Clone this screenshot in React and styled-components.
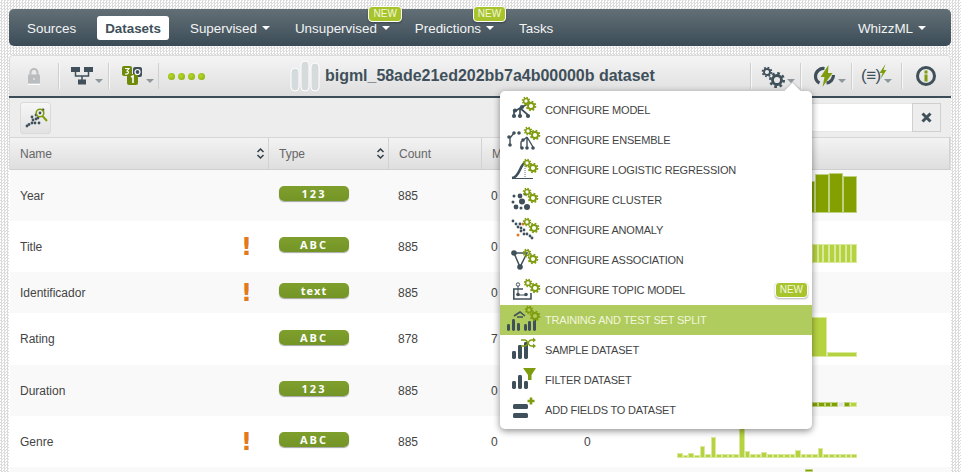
import React from 'react';
import styled, { createGlobalStyle } from 'styled-components';

const Global = createGlobalStyle`
  html, body { margin: 0; padding: 0; height: 472px; overflow: hidden; }
  body {
    font-family: "Liberation Sans", Arial, sans-serif;
    background-color: #fff;
    background-image: repeating-conic-gradient(#dcdcdc 0 25%, #fff 0 50%);
    background-size: 3px 3px;
  }
`;
const Page = styled.div`width: 942px; padding: 9px 0 0 9px;`;
const Nav = styled.nav`
  height: 37px; box-sizing: border-box; display: flex; align-items: center; gap: 13px; padding: 1px 21px 0 10px; border-radius: 5px;
  background: linear-gradient(#636f76, #3b4c57); margin-bottom: 9px;
`;
const NavItem = styled.div`
  position: relative; display: flex; align-items: center; gap: 5px; height: 24px;
  padding: ${p => (p.$menu ? '0 4px 0 8px' : '0 8px')}; font-size: 13.4px; border-radius: 3px;
  color: ${p => (p.$active ? '#3f505a' : '#f2f4f4')};
  background: ${p => (p.$active ? '#fff' : 'transparent')};
  font-weight: ${p => (p.$active ? 700 : 400)};
  ${p => p.$right && 'margin-left: auto;'}
`;
const Caret = styled.i`
  display: block; width: 0; height: 0; flex: none;
  border-left: ${p => p.$s || 4.5}px solid transparent; border-right: ${p => p.$s || 4.5}px solid transparent;
  border-top: ${p => p.$s || 4.5}px solid ${p => p.$c || '#fff'};
`;
const Badge = styled.span`
  font-size: 10px; line-height: 14px; color: #f4f8dc; background: #a8c42c; border: 1px solid #fff; border-radius: 4px;
  padding: 0 4px; box-shadow: 0 1px 2px rgba(0,0,0,.3);
`;
const NavBadge = styled(Badge)`position: absolute; top: -10px; right: -8px;`;

const Panel = styled.main`position: relative; background: #fff;`;
const ToolWrap = styled.div`border-bottom: 2px solid #3b4c57;`;
const Toolbar = styled.div`
  height: 41px; display: flex; align-items: center; border: 1px solid #dcdcdc; border-bottom: 0; border-radius: 4px 4px 0 0;
  background: linear-gradient(#f4f4f4, #dedede); box-sizing: border-box;
`;
const Tool = styled.div`
  width: ${p => p.$w}px; height: 26px; display: flex; align-items: center; justify-content: ${p => (p.$pl ? 'flex-start' : 'center')};
  gap: ${p => p.$gap ?? 2}px; padding-left: ${p => p.$pl || 0}px; flex: none; box-sizing: border-box;
  ${p => p.$sep && 'border-left: 1px solid #cfcfcf; box-shadow: inset 1px 0 0 #f7f7f7;'}
`;
const ToolCaret = styled(Caret).attrs({ $s: 4, $c: '#8e979c' })`margin-top: 9px;`;
const Dots = styled.div`display: flex; gap: 3px; padding-left: 9px; width: 122px; flex: none;`;
const Dot = styled.span`
  width: 7px; height: 7px; border-radius: 50%; background: radial-gradient(circle at 40% 40%, #b5d82a, #86a80c);
`;
const Title = styled.h1`
  margin: 0; flex: 1; display: flex; align-items: center; gap: 5px; font-size: 16px; font-weight: 700; color: #3f505a; white-space: nowrap; letter-spacing: -.03px;
`;
const Formula = styled.span`font-size: 17px; color: #3f505a; letter-spacing: -.5px;`;
const Bolt = styled.svg`margin: -6px -4px 0 -3px; flex: none;`;

const SearchBar = styled.div`
  height: 39px; display: flex; align-items: center; justify-content: space-between; padding: 0 10px 0 11px;
  background: #ededed; border-left: 1px solid #ddd; border-bottom: 1px solid #d6d6d6;
`;
const IconButton = styled.button`
  width: 29px; height: 30px; padding: 0; border: 0; border-radius: 3px; display: flex; align-items: center; justify-content: center;
  background: linear-gradient(#f6f6f6, #e2e2e2); box-shadow: 0 0 0 1px #dadada, 0 1px 1px rgba(0,0,0,.15);
`;
const SearchBox = styled.div`display: flex; height: 29px;`;
const SearchInput = styled.div`width: 200px; background: #fff; border: 1px solid #e6e6e6; border-right: 0;`;
const ClearButton = styled.div`
  width: 27px; border: 1px solid #cfcfcf; background: #ededed; display: flex; align-items: center; justify-content: center;
`;

const columns = '259px 120px 93px 93px 102px 1fr';
const HeadRow = styled.div`
  display: grid; grid-template-columns: ${columns}; height: 31px; background: linear-gradient(#f3f3f3, #dedede);
  border-left: 1px solid #ddd; border-bottom: 1px solid #cfcfcf; border-right: 1px solid #ddd;
`;
const HeadCell = styled.div`
  display: flex; align-items: center; justify-content: space-between; padding: 0 3px 0 10px; font-size: 12px; color: #666;
  border-right: 1px solid #d2d2d2; box-sizing: border-box;
`;
const Row = styled.div`
  display: grid; grid-template-columns: ${columns}; height: ${p => p.$h}px; margin-left: 1px;
  background: ${p => (p.$odd ? '#f9f9f9' : '#fff')};
`;
const Cell = styled.div`display: flex; align-items: center; padding-left: ${p => p.$pad ?? 10}px; font-size: 12px; color: #444;`;
const NameCell = styled(Cell)`justify-content: space-between; padding-right: 18px;`;
const Warn = styled.span`
  font: 700 24px/1 "DejaVu Sans", sans-serif; color: #e2791d; width: 8px; text-align: center; margin-right: 2px;
`;
const TypePill = styled.span`
  display: block; width: 70px; height: 15px; margin-top: -4px; text-align: center; border-radius: 5px;
  background: linear-gradient(#7f9f2d, #739526); box-shadow: 0 1px 1px rgba(0,0,0,.35);
  color: #fff; font: 700 11px/15px "Open Sans", sans-serif; letter-spacing: ${p => p.$ls}px;
`;
const Hist = styled.div`
  grid-column: 6; width: 180px; display: flex; align-items: flex-end; padding-bottom: ${p => p.$pb ?? 8}px;
`;
const Bar = styled.span`
  flex: 1 1 0; box-sizing: border-box; min-width: 0; border: 1px solid ${p => (p.$c === 'dark' ? '#bdd27e' : p.$c === 'gray' ? '#eee' : '#dbe99c')};
  background: ${p => (p.$c === 'dark' ? '#849f00' : p.$c === 'gray' ? '#e2e2e2' : '#b5d340')};
`;

const Menu = styled.div`
  position: absolute; left: 491px; top: 36px; width: 312px; height: 338px; box-sizing: border-box; padding-top: 4px; background: #fff;
  border-radius: 5px; box-shadow: 0 2px 7px rgba(0,0,0,.45); z-index: 5;
  &::before {
    content: ''; position: absolute; right: 14px; top: -6px; width: 11px; height: 11px; background: #fff; transform: rotate(45deg);
    box-shadow: -1px -1px 1px rgba(0,0,0,.12);
  }
`;
const MenuItem = styled.div`
  position: relative; height: 30px; display: flex; align-items: center; font-size: 11px; letter-spacing: -.2px;
  color: ${p => (p.$active ? '#f2f6dd' : '#444')}; background: ${p => (p.$active ? '#b0cb5e' : 'transparent')};
`;
const MenuIcon = styled.svg`width: 45px; height: 30px; flex: none; display: block;`;
const MenuBadge = styled(Badge)`margin-left: auto; margin-right: 4px; letter-spacing: 0;`;

const D = '#3f505a', G = '#7f9c0e';
const Gear = ({ x, y, r, c = G }) => {
  const t = 2 * Math.PI * r * 0.9 / 16;
  return (
    <g fill="none" stroke={c}>
      <circle cx={x} cy={y} r={r * 0.6} strokeWidth={r * 0.38} />
      <circle cx={x} cy={y} r={r * 0.9} strokeWidth={r * 0.34} strokeDasharray={`${t} ${t}`} />
    </g>
  );
};
const Dotted = ({ pts, r = 1.6, c = D }) => <g fill={c}>{pts.map(([x, y], i) => <circle key={i} cx={x} cy={y} r={r} />)}</g>;
const Gears = ({ a = [27, 7], b = [33, 12] }) => <><Gear x={a[0]} y={a[1]} r={4} /><Gear x={b[0]} y={b[1]} r={5} /></>;
const Bars = ({ list, w = 3.6, base = 24, c = D }) => (
  <g fill={c}>{list.map(([x, h], i) => <rect key={i} x={x} y={base - h} width={w} height={h} rx={1.4} />)}</g>
);

const icons = {
  model: <>
    <path d="M14 21V17L20 13L26 10M20 13V21M20 13L28 20" fill="none" stroke={D} strokeWidth="1.7" />
    <Dotted r={2.1} pts={[[14, 21], [20, 21], [28, 21], [15, 15.5], [22, 12]]} /><Gears a={[26, 6]} b={[31, 11]} /></>,
  ensemble: <>
    <path d="M10 20V13L14 8M21 23V17L27 12M27 12V23M27 12L33 22" fill="none" stroke={D} strokeWidth="1.4" />
    <Dotted pts={[[9, 12], [10, 20], [14, 8], [19, 8], [22, 23], [27, 23], [33, 23], [23, 15]]} r={1.8} /><Gears a={[28, 6]} b={[35, 10]} /></>,
  logistic: <>
    <path d="M12 23C20 22 20 9 25 8" fill="none" stroke={D} strokeWidth="2.6" />
    <path d="M25 9V23" stroke={D} strokeWidth=".8" strokeDasharray="1 1" /><path d="M12 23.5H33" stroke={D} />
    <Gears a={[27, 8]} b={[33, 13]} /></>,
  cluster: <>
    <Dotted r={1.5} pts={[[14, 11], [25, 9], [21, 23], [13, 17]]} />
    <Dotted r={2.4} pts={[[20, 11], [16, 22]]} /><Dotted r={3} pts={[[22, 16.5], [27, 22]]} />
    <Gears a={[27, 7]} b={[33, 13]} /></>,
  anomaly: <>
    <Dotted r={1.4} pts={[[13, 6], [16, 9], [18, 12], [21, 13], [21, 16], [24, 15], [24, 19], [27, 19], [30, 21], [32, 23], [20, 9]]} />
    <Dotted r={1.5} c="#e2791d" pts={[[23, 9], [18, 20]]} /><Gears a={[27, 7]} b={[34, 13]} /></>,
  association: <>
    <path d="M14 8L20 22L27 8Z" fill="none" stroke={D} strokeWidth="1.5" /><Dotted r={2.8} pts={[[14, 8], [20, 22]]} />
    <Gears a={[27, 8]} b={[33, 14]} /></>,
  topic: <>
    <path d="M23 14H13.8V24H31V18" fill="none" stroke={D} strokeWidth="1.6" />
    <path d="M18 11V20H27" fill="none" stroke={D} />
    <circle cx="18" cy="9.5" r="1.7" fill="none" stroke={D} /><Dotted r={1.8} pts={[[18, 19.5], [26, 19.5]]} />
    <Gears a={[28, 8]} b={[35, 13]} /></>,
  split: <>
    <Bars base={26} list={[[7, 7], [12, 12], [17, 8], [24, 7], [28, 10], [33, 13]]} w={3} />
    <path d="M14 11L20 7L25 11M17 12H23" fill="none" stroke={D} strokeWidth="1.6" /><Gears a={[29, 5]} b={[35, 11]} /></>,
  sample: <>
    <Bars list={[[12, 8], [18, 14], [24, 17]]} w={4} />
    <path d="M21 5H25C28 5 28 11 31 11H34M21 11H25C28 11 28 5 31 5H34" fill="none" stroke={G} strokeWidth="1.5" />
    <path d="M33 2.5L36 5L33 7.5ZM33 8.5L36 11L33 13.5Z" fill={G} /></>,
  filter: <>
    <Bars list={[[12, 8], [18, 14], [24, 8]]} w={4} /><path d="M23 3H36L31.5 10V15H28V10Z" fill={G} /></>,
  add: <>
    <rect x="13" y="9" width="15" height="5" rx="1.5" fill={D} /><rect x="13" y="18" width="15" height="5" rx="1.5" fill={D} />
    <path d="M31 2.5V9.5M27.5 6H34.5" stroke={G} strokeWidth="2.6" /></>,
};

const menu = [
  ['model', 'CONFIGURE MODEL'], ['ensemble', 'CONFIGURE ENSEMBLE'], ['logistic', 'CONFIGURE LOGISTIC REGRESSION'],
  ['cluster', 'CONFIGURE CLUSTER'], ['anomaly', 'CONFIGURE ANOMALY'], ['association', 'CONFIGURE ASSOCIATION'],
  ['topic', 'CONFIGURE TOPIC MODEL', 'new'], ['split', 'TRAINING AND TEST SET SPLIT', 'active'],
  ['sample', 'SAMPLE DATASET'], ['filter', 'FILTER DATASET'], ['add', 'ADD FIELDS TO DATASET'],
];

const SortIcon = () => (
  <svg width="9" height="13" viewBox="0 0 9 13"><path d="M1.5 5L4.5 2L7.5 5M1.5 8L4.5 11L7.5 8" fill="none" stroke="#2f3f49" strokeWidth="1.5" /></svg>
);
const fill = (n, h, c) => Array.from({ length: n }, () => ({ h, c }));
const genre = [5, 3, 5, 3, 12, 4, 21, 4, 4, 4, 4, 36, 7, 4, 4, 6, 4, 4, 4, 4, 4, 8, 4, 4, 4, 10, 4, 4, 4, 4, 4, 4];
const rows = [
  { name: 'Year', type: '123', count: 885, m: 0, h: 51, pb: 8, bars: [8, 10, 12, 14, 18, 20, 22, 26, 28, 32, 39, 40, 37].map(h => ({ h, c: 'dark' })) },
  { name: 'Title', warn: 1, type: 'ABC', count: 885, m: 0, h: 51, pb: 9, bars: fill(32, 19) },
  { name: 'Identificador', warn: 1, type: 'text', ls: 1, count: 885, m: 0, h: 41, bars: [] },
  { name: 'Rating', type: 'ABC', count: 878, m: 7, h: 52, pb: 8, bars: [0, 0, 0, 0, 40, 5].map(h => ({ h })) },
  { name: 'Duration', type: '123', count: 885, m: 0, h: 51, pb: 9, bars: [...fill(25, 5, 'dark'), { h: 5, c: 'gray' }, { h: 5, c: 'dark' }, { h: 5 }] },
  { name: 'Genre', warn: 1, type: 'ABC', count: 885, m: 0, e: 0, h: 51, pb: 9, bars: genre.map(h => ({ h })) },
];

const Histogram = ({ bars, pb }) => (
  <Hist $pb={pb}>{bars.map((b, i) => <Bar key={i} $c={b.c} style={{ height: b.h }} />)}</Hist>
);

const SearchGlyph = () => (
  <svg width="24" height="24" viewBox="0 0 24 24">
    <Dotted r={1.4} pts={[[3, 20], [5, 18.5], [8, 17], [9, 14], [11, 17], [12, 13], [14, 12], [15, 17], [12, 9], [8, 11], [16, 7], [19, 4]]} />
    <circle cx="16" cy="7" r="3.8" fill="none" stroke={G} strokeWidth="1.6" /><path d="M18.5 10L23 15" stroke={G} strokeWidth="2" />
  </svg>
);

export default function App() {
  return (
    <>
      <Global />
      <Page>
        <Nav>
          <NavItem>Sources</NavItem>
          <NavItem $active>Datasets</NavItem>
          <NavItem $menu>Supervised <Caret /></NavItem>
          <NavItem $menu>Unsupervised <Caret /><NavBadge>NEW</NavBadge></NavItem>
          <NavItem $menu>Predictions <Caret /><NavBadge>NEW</NavBadge></NavItem>
          <NavItem>Tasks</NavItem>
          <NavItem $right $menu>WhizzML <Caret /></NavItem>
        </Nav>
        <Panel>
          <ToolWrap>
            <Toolbar>
              <Tool $w={48}>
                <svg width="14" height="18" viewBox="0 0 14 18">
                  <path d="M3.5 8V5.5a3.5 3.5 0 017 0V8" fill="none" stroke="#b9bdbf" strokeWidth="2" />
                  <rect x="1" y="7.5" width="12" height="9" rx="1" fill="#b9bdbf" /><path d="M1 17.5H13" stroke="#fff" /><circle cx="7" cy="12" r="1" fill="#e4e4e4" />
                </svg>
              </Tool>
              <Tool $w={50} $sep $pl={11} $gap={1}>
                <svg width="24" height="18" viewBox="0 0 24 18">
                  <path d="M1 0H10V5H1ZM14 0H23V5H14ZM8 12.5H16V17.5H8Z" fill="#3f505a" />
                  <path d="M5.5 5V9H18.5V5M12 9V13" fill="none" stroke="#3f505a" strokeWidth="1.5" />
                </svg>
                <ToolCaret />
              </Tool>
              <Tool $w={50} $sep $pl={13} $gap={2}>
                <svg width="22" height="20" viewBox="0 0 22 20">
                  <rect x="0" y="0" width="10" height="10" rx="2" fill="#6d8a0a" /><rect x="11" y="1" width="9" height="10" rx="2" fill="#3f505a" />
                  <rect x="5" y="8" width="11" height="11" rx="2" fill="#6d8a0a" />
                  <path d="M3 2.5H7L5 5C7 5 7.5 8.5 3 8" fill="none" stroke="#fff" strokeWidth="1.2" />
                  <circle cx="15.5" cy="6" r="2.5" fill="none" stroke="#fff" strokeWidth="1.2" />
                  <path d="M9 11L11 10V17" fill="none" stroke="#fff" strokeWidth="1.6" />
                </svg>
                <ToolCaret />
              </Tool>
              <Tool $w={1} $sep />
              <Dots><Dot /><Dot /><Dot /><Dot /></Dots>
              <Title>
                <svg width="30" height="32" viewBox="0 0 30 32">
                  <g fill="#d5dadc" stroke="#fff"><rect x="1" y="8" width="8" height="23" rx="4" /><rect x="11" y="1" width="8" height="30" rx="4" /><rect x="21" y="3" width="8" height="28" rx="4" /></g>
                </svg>
                bigml_58ade21ed202bb7a4b00000b dataset
              </Title>
              <Tool $w={50} $sep $pl={9} $gap={1}>
                <svg width="26" height="24" viewBox="0 0 26 24">
                  <Gear x={7} y={8} r={5} c={D} /><Gear x={17} y={16} r={7.5} c={D} />
                </svg>
                <ToolCaret />
              </Tool>
              <Tool $w={51} $sep $pl={11} $gap={1}>
                <svg width="25" height="24" viewBox="0 0 24 24">
                  <path d="M12 4.5A8 8 0 003 12.5A7.5 7.5 0 007 19M14 19A8 8 0 0021 11" fill="none" stroke={D} strokeWidth="3.2" />
                  <path d="M16 1L8 13H12L10 23L20 9H15.5Z" fill="#7f9c0e" />
                </svg>
                <ToolCaret />
              </Tool>
              <Tool $w={50} $sep $pl={9} $gap={0}>
                <Formula>(≡)</Formula>
                <Bolt width="10" height="18" viewBox="0 0 9 18"><path d="M7 0L1 9H4L2 15L8 6H5Z" fill="#7f9c0e" /></Bolt>
                <ToolCaret />
              </Tool>
              <Tool $w={49} $sep>
                <svg width="22" height="22" viewBox="0 0 22 22">
                  <circle cx="11" cy="11" r="8.5" fill="none" stroke={D} strokeWidth="3" />
                  <rect x="9.5" y="9.5" width="3" height="7" fill="#7f9c0e" /><rect x="9.5" y="5.5" width="3" height="3" fill="#7f9c0e" />
                </svg>
              </Tool>
            </Toolbar>
          </ToolWrap>
          <SearchBar>
            <IconButton aria-label="Search"><SearchGlyph /></IconButton>
            <SearchBox>
              <SearchInput />
              <ClearButton>
                <svg width="11" height="11" viewBox="0 0 11 11"><path d="M1.5 1.5L9.5 9.5M9.5 1.5L1.5 9.5" stroke="#3f505a" strokeWidth="3" /></svg>
              </ClearButton>
            </SearchBox>
          </SearchBar>
          <HeadRow>
            <HeadCell>Name <SortIcon /></HeadCell>
            <HeadCell>Type <SortIcon /></HeadCell>
            <HeadCell>Count</HeadCell>
            <HeadCell>Missing</HeadCell>
            <HeadCell />
            <HeadCell />
          </HeadRow>
          {rows.map((r, i) => (
            <Row key={r.name} $h={r.h} $odd={i % 2 === 0}>
              <NameCell>{r.name}{r.warn && <Warn>!</Warn>}</NameCell>
              <Cell $pad={10}><TypePill $ls={r.ls ?? 2}>{r.type}</TypePill></Cell>
              <Cell $pad={9}>{r.count}</Cell>
              <Cell $pad={9}>{r.m}</Cell>
              <Cell $pad={9}>{r.e}</Cell>
              <Histogram bars={r.bars} pb={r.pb} />
            </Row>
          ))}
          <Row $h={5} $odd>
            <Hist $pb={0}>
              {Array.from({ length: 32 }, (_, i) => <Bar key={i} $c="dark" style={{ height: i === 23 ? 3 : 0, borderWidth: i === 23 ? 1 : 0 }} />)}
            </Hist>
          </Row>
          <Menu>
            {menu.map(([icon, label, flag]) => (
              <MenuItem key={label} $active={flag === 'active'}>
                <MenuIcon viewBox="0 0 45 30">{icons[icon]}</MenuIcon>
                {label}
                {flag === 'new' && <MenuBadge>NEW</MenuBadge>}
              </MenuItem>
            ))}
          </Menu>
        </Panel>
      </Page>
    </>
  );
}
